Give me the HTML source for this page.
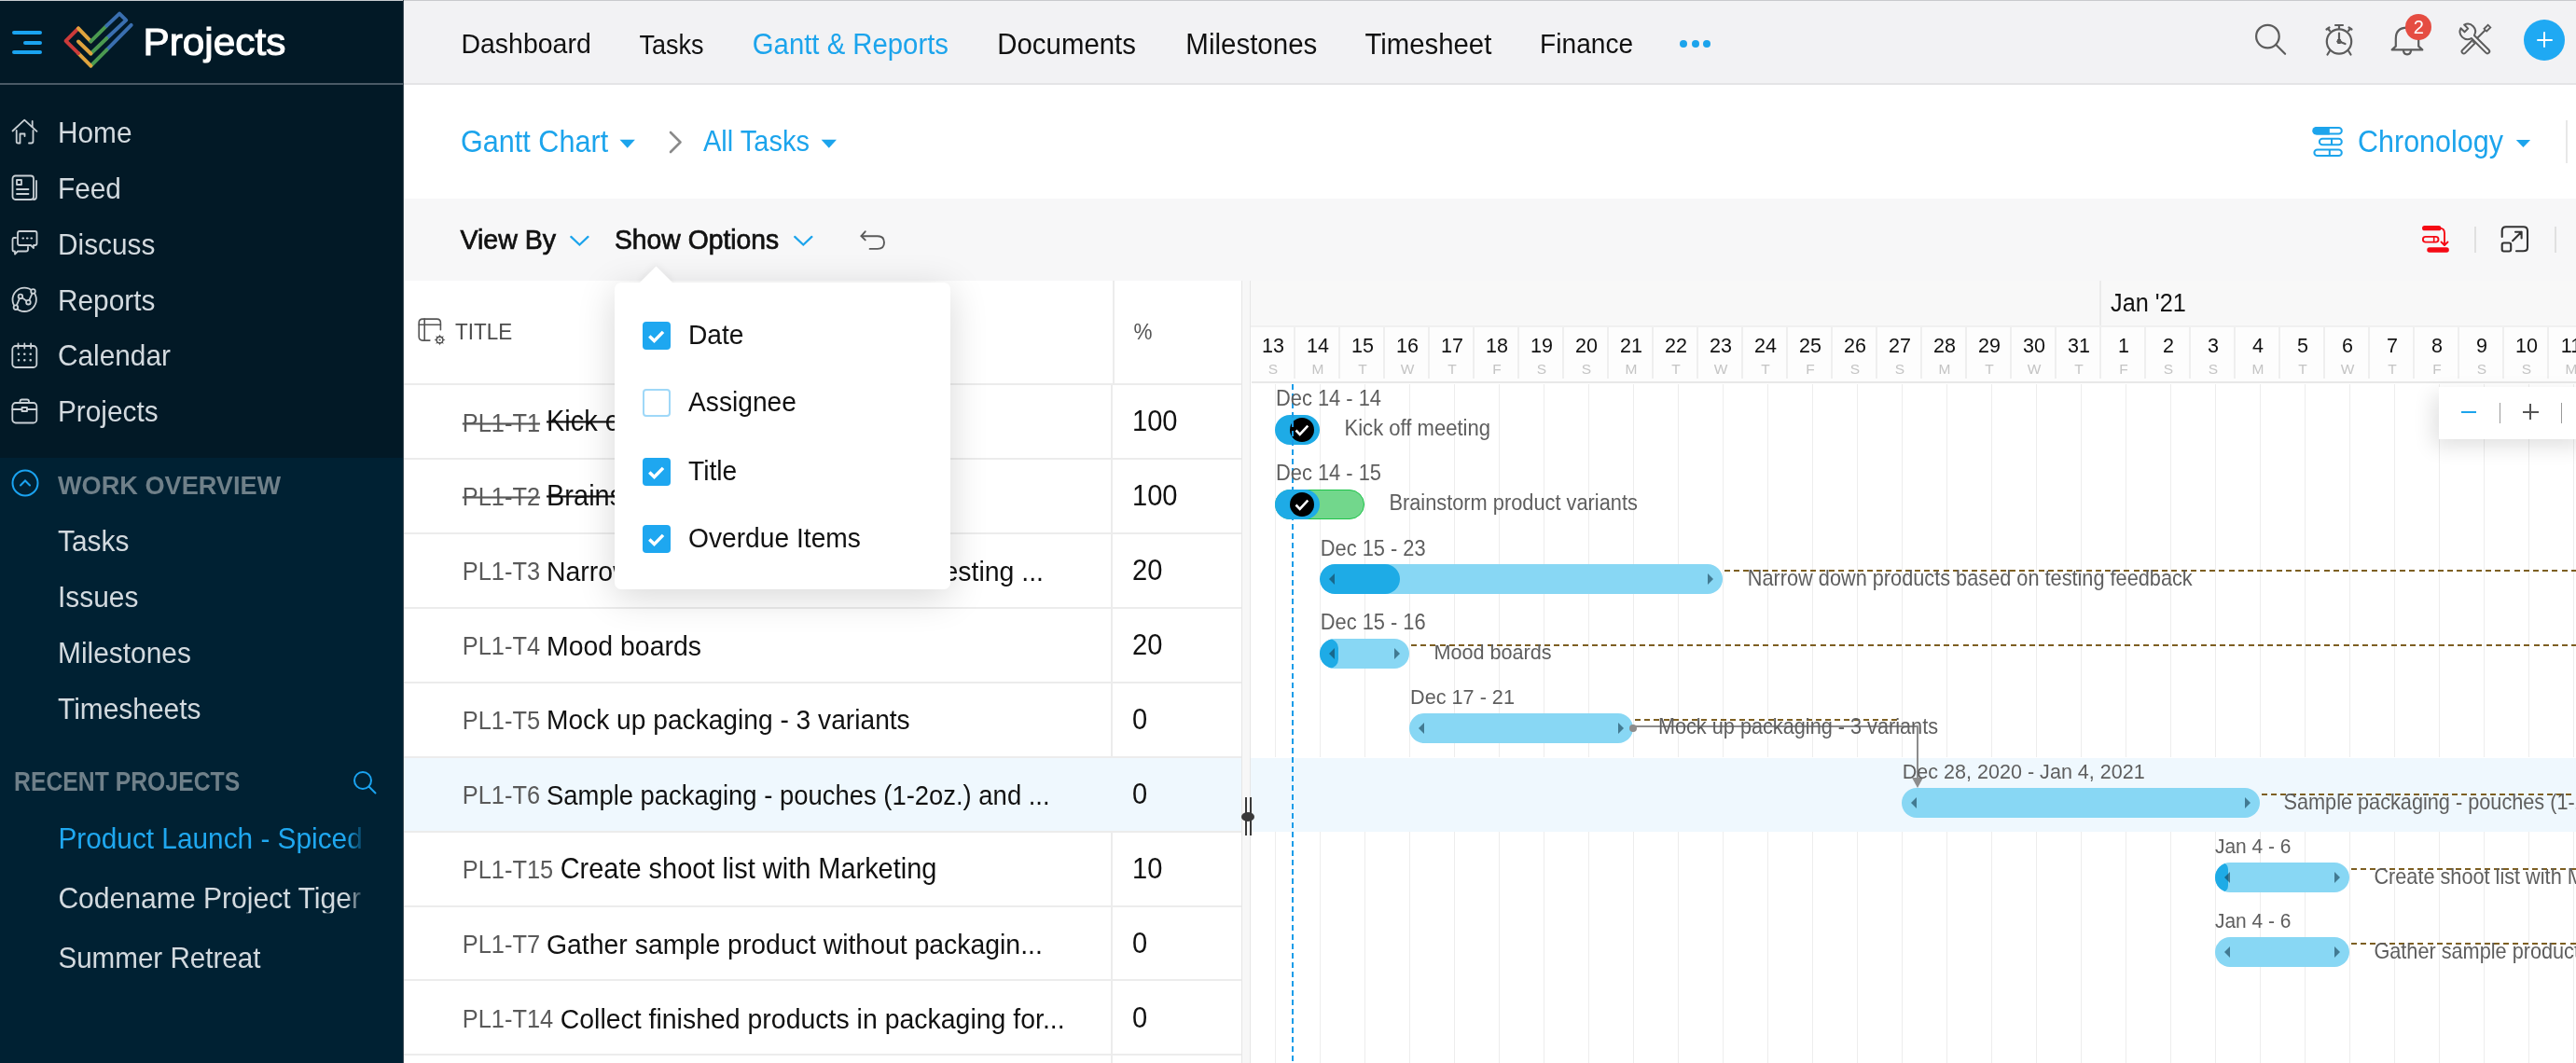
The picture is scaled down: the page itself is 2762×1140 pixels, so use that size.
<!DOCTYPE html>
<html><head><meta charset="utf-8"><style>
html,body{margin:0;padding:0;width:2762px;height:1140px;overflow:hidden;background:#fff}
body{position:relative;will-change:transform;font-family:"Liberation Sans",sans-serif}
.t{position:absolute;line-height:1;white-space:nowrap}
.r{position:absolute}
svg{position:absolute;overflow:visible}
</style></head><body>
<div class="r" style="left:0px;top:0px;width:433px;height:1140px;background:#002133"></div><div class="r" style="left:0px;top:0px;width:433px;height:491px;background:#021926"></div><div class="r" style="left:0px;top:0px;width:433px;height:1px;background:#c8ccd0"></div><div class="r" style="left:0px;top:89px;width:433px;height:2px;background:#4a5a66"></div><div class="r" style="left:432px;top:0px;width:1px;height:1140px;background:#3e4d57"></div><div class="r" style="left:13px;top:33px;width:32px;height:4px;background:#1aa3f0;border-radius:2px"></div><div class="r" style="left:25px;top:44px;width:20px;height:4px;background:#1aa3f0;border-radius:2px"></div><div class="r" style="left:13px;top:54px;width:32px;height:4px;background:#1aa3f0;border-radius:2px"></div><div class="t" style="left:153.5px;top:23.79px;font-size:42.3px;color:#fff;font-weight:400;transform:scale(1.0,0.98);transform-origin:0 35.81px;-webkit-text-stroke:1.1px #fff">Projects</div><div class="t" style="left:62px;top:127.77px;font-size:29.8px;color:#d3dadf;font-weight:400;transform:scale(1.0,1.06);transform-origin:0 25.23px;">Home</div><div class="t" style="left:62px;top:187.77px;font-size:29.8px;color:#d3dadf;font-weight:400;transform:scale(1.0,1.06);transform-origin:0 25.23px;">Feed</div><div class="t" style="left:62px;top:247.77px;font-size:29.8px;color:#d3dadf;font-weight:400;transform:scale(1.0,1.06);transform-origin:0 25.23px;">Discuss</div><div class="t" style="left:62px;top:307.77px;font-size:29.8px;color:#d3dadf;font-weight:400;transform:scale(1.0,1.06);transform-origin:0 25.23px;">Reports</div><div class="t" style="left:62px;top:366.77px;font-size:29.8px;color:#d3dadf;font-weight:400;transform:scale(1.0,1.06);transform-origin:0 25.23px;">Calendar</div><div class="t" style="left:62px;top:427.37px;font-size:29.8px;color:#d3dadf;font-weight:400;transform:scale(1.0,1.06);transform-origin:0 25.23px;">Projects</div><div class="t" style="left:61.7px;top:506.47px;font-size:28.5px;color:#6f8089;font-weight:700;transform:scale(0.952,1.0);transform-origin:0 24.13px;">WORK OVERVIEW</div><div class="t" style="left:62px;top:566.09px;font-size:29.9px;color:#d3dadf;font-weight:400;transform:scale(1.0,1.06);transform-origin:0 25.31px;">Tasks</div><div class="t" style="left:62px;top:625.69px;font-size:29.9px;color:#d3dadf;font-weight:400;transform:scale(1.0,1.06);transform-origin:0 25.31px;">Issues</div><div class="t" style="left:62px;top:685.69px;font-size:29.9px;color:#d3dadf;font-weight:400;transform:scale(1.0,1.06);transform-origin:0 25.31px;">Milestones</div><div class="t" style="left:62px;top:745.69px;font-size:29.9px;color:#d3dadf;font-weight:400;transform:scale(1.0,1.06);transform-origin:0 25.31px;">Timesheets</div><div class="t" style="left:14.7px;top:824.45px;font-size:29px;color:#6f8089;font-weight:700;transform:scale(0.854,1.0);transform-origin:0 24.55px;">RECENT PROJECTS</div><div class="t" style="left:62.4px;top:885.07px;font-size:29.8px;color:#1fa8f0;font-weight:400;transform:scale(1.0,1.06);transform-origin:0 25.23px;-webkit-mask-image:linear-gradient(to right,#000 310px,rgba(0,0,0,.25) 326px,transparent 330px)">Product Launch - Spiced</div><div class="t" style="left:62.4px;top:948.82px;font-size:30.1px;color:#d3dadf;font-weight:400;transform:scale(1.0,1.06);transform-origin:0 25.48px;-webkit-mask-image:linear-gradient(to right,#000 310px,rgba(0,0,0,.3) 324px,transparent 328px)">Codename Project Tiger</div><div class="t" style="left:62.4px;top:1013.14px;font-size:29.6px;color:#d3dadf;font-weight:400;transform:scale(1.0,1.06);transform-origin:0 25.06px;">Summer Retreat</div><div class="r" style="left:433px;top:0px;width:2329px;height:90px;background:#f2f2f4"></div><div class="r" style="left:433px;top:0px;width:2329px;height:1px;background:#c9cacd"></div><div class="r" style="left:433px;top:89px;width:2329px;height:2px;background:#e4e4e6"></div><div class="t" style="left:494.4px;top:33.37px;font-size:28.5px;color:#111;font-weight:400;transform:scale(1.0,1.06);transform-origin:0 24.13px;">Dashboard</div><div class="t" style="left:685.4px;top:34.59px;font-size:27.07px;color:#111;font-weight:400;transform:scale(1.0,1.06);transform-origin:0 22.91px;">Tasks</div><div class="t" style="left:1271.3px;top:32.51px;font-size:29.52px;color:#111;font-weight:400;transform:scale(1.0,1.06);transform-origin:0 24.99px;">Milestones</div><div class="t" style="left:1463.4px;top:32.66px;font-size:29.35px;color:#111;font-weight:400;transform:scale(1.0,1.06);transform-origin:0 24.84px;">Timesheet</div><div class="t" style="left:1651.1px;top:33.70px;font-size:28.11px;color:#111;font-weight:400;transform:scale(1.0,1.06);transform-origin:0 23.80px;">Finance</div><div class="t" style="left:1069.3px;top:32.61px;font-size:29.4px;color:#111;font-weight:400;transform:scale(1.0,1.06);transform-origin:0 24.89px;">Documents</div><div class="t" style="left:806.8px;top:32.68px;font-size:29.32px;color:#1ca4ec;font-weight:400;transform:scale(1.0,1.06);transform-origin:0 24.82px;">Gantt &amp; Reports</div><div class="r" style="left:433px;top:91px;width:2329px;height:122px;background:#fff"></div><div class="t" style="left:494px;top:137.10px;font-size:30.6px;color:#1ca4ec;font-weight:400;transform:scale(1.0,1.06);transform-origin:0 25.90px;">Gantt Chart</div><div class="t" style="left:754px;top:138.45px;font-size:29px;color:#1ca4ec;font-weight:400;transform:scale(1.0,1.06);transform-origin:0 24.55px;">All Tasks</div><div class="t" style="left:2528px;top:137.18px;font-size:30.5px;color:#1ca4ec;font-weight:400;transform:scale(1.0,1.06);transform-origin:0 25.82px;">Chronology</div><div class="r" style="left:433px;top:213px;width:2329px;height:88px;background:#f7f7f8"></div><div class="t" style="left:493.4px;top:242.99px;font-size:28.6px;color:#111;font-weight:400;transform:scale(1.0,1.06);transform-origin:0 24.21px;-webkit-text-stroke:0.7px #111">View By</div><div class="t" style="left:659px;top:243.24px;font-size:28.3px;color:#111;font-weight:400;transform:scale(1.0,1.06);transform-origin:0 23.96px;-webkit-text-stroke:0.7px #111">Show Options</div><div class="r" style="left:433px;top:301px;width:908px;height:839px;background:#fff"></div><div class="t" style="left:488.3px;top:344.21px;font-size:24.8px;color:#4a4a4a;font-weight:400;transform:scale(0.905,1.0);transform-origin:0 20.99px;">TITLE</div><div class="t" style="left:1215.6px;top:346.15px;font-size:22.5px;color:#555;font-weight:400;transform:scale(1.0,1.06);transform-origin:0 19.05px;">%</div><div class="r" style="left:1193px;top:301px;width:2px;height:110px;background:#ececec"></div><div class="r" style="left:1191px;top:411px;width:2px;height:729px;background:#ececec"></div><div class="r" style="left:1331px;top:301px;width:1px;height:839px;background:#e6e6e6"></div><div class="r" style="left:1332px;top:301px;width:8px;height:839px;background:#f7f7f7"></div><div class="r" style="left:1340px;top:301px;width:1px;height:839px;background:#e6e6e6"></div><div class="r" style="left:433px;top:813px;width:898px;height:79px;background:#eff8fe"></div><div class="r" style="left:1341px;top:813px;width:1421px;height:79px;background:#eff8fe"></div><div class="r" style="left:433px;top:411.0px;width:898px;height:2px;background:#ececec"></div><div class="r" style="left:433px;top:490.9px;width:898px;height:2px;background:#ececec"></div><div class="r" style="left:433px;top:570.9px;width:898px;height:2px;background:#ececec"></div><div class="r" style="left:433px;top:650.8px;width:898px;height:2px;background:#ececec"></div><div class="r" style="left:433px;top:730.7px;width:898px;height:2px;background:#ececec"></div><div class="r" style="left:433px;top:810.7px;width:898px;height:2px;background:#ececec"></div><div class="r" style="left:433px;top:890.6px;width:898px;height:2px;background:#ececec"></div><div class="r" style="left:433px;top:970.5px;width:898px;height:2px;background:#ececec"></div><div class="r" style="left:433px;top:1050.4px;width:898px;height:2px;background:#ececec"></div><div class="r" style="left:433px;top:1130.4px;width:898px;height:2px;background:#ececec"></div><div class="t" style="left:495.8px;top:441.50px;font-size:25.4px;color:#5a5a5a;font-weight:400;transform:scale(1.0,1.06);transform-origin:0 21.50px;text-decoration:line-through;">PL1-T1</div><div class="t" style="left:586px;top:438.45px;font-size:29px;color:#111;font-weight:400;transform:scale(1.0,1.06);transform-origin:0 24.55px;text-decoration:line-through;">Kick off meeting</div><div class="t" style="left:1214px;top:438.37px;font-size:29.1px;color:#111;font-weight:400;transform:scale(1.0,1.06);transform-origin:0 24.63px;">100</div><div class="t" style="left:495.8px;top:521.45px;font-size:25.4px;color:#5a5a5a;font-weight:400;transform:scale(1.0,1.06);transform-origin:0 21.50px;text-decoration:line-through;">PL1-T2</div><div class="t" style="left:586px;top:518.40px;font-size:29px;color:#111;font-weight:400;transform:scale(1.0,1.06);transform-origin:0 24.55px;text-decoration:line-through;">Brainstorm product variants</div><div class="t" style="left:1214px;top:518.32px;font-size:29.1px;color:#111;font-weight:400;transform:scale(1.0,1.06);transform-origin:0 24.63px;">100</div><div class="t" style="left:495.8px;top:601.40px;font-size:25.4px;color:#5a5a5a;font-weight:400;transform:scale(1.0,1.06);transform-origin:0 21.50px;">PL1-T3</div><div class="t" style="left:586px;top:598.81px;font-size:28.46px;color:#111;font-weight:400;transform:scale(1.0,1.06);transform-origin:0 24.09px;">Narrow down products based on testing ...</div><div class="t" style="left:1214px;top:598.27px;font-size:29.1px;color:#111;font-weight:400;transform:scale(1.0,1.06);transform-origin:0 24.63px;">20</div><div class="t" style="left:495.8px;top:681.35px;font-size:25.4px;color:#5a5a5a;font-weight:400;transform:scale(1.0,1.06);transform-origin:0 21.50px;">PL1-T4</div><div class="t" style="left:586px;top:678.78px;font-size:28.44px;color:#111;font-weight:400;transform:scale(1.0,1.06);transform-origin:0 24.07px;">Mood boards</div><div class="t" style="left:1214px;top:678.22px;font-size:29.1px;color:#111;font-weight:400;transform:scale(1.0,1.06);transform-origin:0 24.63px;">20</div><div class="t" style="left:495.8px;top:761.30px;font-size:25.4px;color:#5a5a5a;font-weight:400;transform:scale(1.0,1.06);transform-origin:0 21.50px;">PL1-T5</div><div class="t" style="left:586px;top:758.96px;font-size:28.16px;color:#111;font-weight:400;transform:scale(1.0,1.06);transform-origin:0 23.84px;">Mock up packaging - 3 variants</div><div class="t" style="left:1214px;top:758.17px;font-size:29.1px;color:#111;font-weight:400;transform:scale(1.0,1.06);transform-origin:0 24.63px;">0</div><div class="t" style="left:495.8px;top:841.25px;font-size:25.4px;color:#5a5a5a;font-weight:400;transform:scale(1.0,1.06);transform-origin:0 21.50px;">PL1-T6</div><div class="t" style="left:586px;top:839.53px;font-size:27.43px;color:#111;font-weight:400;transform:scale(1.0,1.06);transform-origin:0 23.22px;">Sample packaging - pouches (1-2oz.) and ...</div><div class="t" style="left:1214px;top:838.12px;font-size:29.1px;color:#111;font-weight:400;transform:scale(1.0,1.06);transform-origin:0 24.63px;">0</div><div class="t" style="left:495.8px;top:921.20px;font-size:25.4px;color:#5a5a5a;font-weight:400;transform:scale(1.0,1.06);transform-origin:0 21.50px;">PL1-T15</div><div class="t" style="left:600.7px;top:918.19px;font-size:28.95px;color:#111;font-weight:400;transform:scale(1.0,1.06);transform-origin:0 24.51px;">Create shoot list with Marketing</div><div class="t" style="left:1214px;top:918.07px;font-size:29.1px;color:#111;font-weight:400;transform:scale(1.0,1.06);transform-origin:0 24.63px;">10</div><div class="t" style="left:495.8px;top:1001.15px;font-size:25.4px;color:#5a5a5a;font-weight:400;transform:scale(1.0,1.06);transform-origin:0 21.50px;">PL1-T7</div><div class="t" style="left:586px;top:998.61px;font-size:28.4px;color:#111;font-weight:400;transform:scale(1.0,1.06);transform-origin:0 24.04px;">Gather sample product without packagin...</div><div class="t" style="left:1214px;top:998.02px;font-size:29.1px;color:#111;font-weight:400;transform:scale(1.0,1.06);transform-origin:0 24.63px;">0</div><div class="t" style="left:495.8px;top:1081.10px;font-size:25.4px;color:#5a5a5a;font-weight:400;transform:scale(1.0,1.06);transform-origin:0 21.50px;">PL1-T14</div><div class="t" style="left:600.7px;top:1078.51px;font-size:28.46px;color:#111;font-weight:400;transform:scale(1.0,1.06);transform-origin:0 24.09px;">Collect finished products in packaging for...</div><div class="t" style="left:1214px;top:1077.97px;font-size:29.1px;color:#111;font-weight:400;transform:scale(1.0,1.06);transform-origin:0 24.63px;">0</div><div class="r" style="left:1341px;top:301px;width:1421px;height:109px;background:#fdfdfd"></div><div class="r" style="left:1341px;top:301px;width:1421px;height:48px;background:#f8f8f8"></div><div class="r" style="left:1341px;top:349px;width:1421px;height:2px;background:#f0f0f0"></div><div class="r" style="left:1342px;top:409px;width:1420px;height:2px;background:#e8e8e8"></div><div class="r" style="left:2251px;top:301px;width:2px;height:48px;background:#ebebeb"></div><div class="t" style="left:2263px;top:313.18px;font-size:25.3px;color:#111;font-weight:400;transform:scale(1.0,1.06);transform-origin:0 21.42px;">Jan '21</div><div class="r" style="left:1387px;top:351px;width:2px;height:55px;background:#efefef"></div><div class="t" style="left:1335px;width:60px;text-align:center;top:360.70px;font-size:21.5px;color:#111">13</div><div class="t" style="left:1335px;width:60px;text-align:center;top:388.38px;font-size:15.5px;color:#c4c4c4">S</div><div class="r" style="left:1435px;top:351px;width:2px;height:55px;background:#efefef"></div><div class="t" style="left:1383px;width:60px;text-align:center;top:360.70px;font-size:21.5px;color:#111">14</div><div class="t" style="left:1383px;width:60px;text-align:center;top:388.38px;font-size:15.5px;color:#c4c4c4">M</div><div class="r" style="left:1483px;top:351px;width:2px;height:55px;background:#efefef"></div><div class="t" style="left:1431px;width:60px;text-align:center;top:360.70px;font-size:21.5px;color:#111">15</div><div class="t" style="left:1431px;width:60px;text-align:center;top:388.38px;font-size:15.5px;color:#c4c4c4">T</div><div class="r" style="left:1531px;top:351px;width:2px;height:55px;background:#efefef"></div><div class="t" style="left:1479px;width:60px;text-align:center;top:360.70px;font-size:21.5px;color:#111">16</div><div class="t" style="left:1479px;width:60px;text-align:center;top:388.38px;font-size:15.5px;color:#c4c4c4">W</div><div class="r" style="left:1579px;top:351px;width:2px;height:55px;background:#efefef"></div><div class="t" style="left:1527px;width:60px;text-align:center;top:360.70px;font-size:21.5px;color:#111">17</div><div class="t" style="left:1527px;width:60px;text-align:center;top:388.38px;font-size:15.5px;color:#c4c4c4">T</div><div class="r" style="left:1627px;top:351px;width:2px;height:55px;background:#efefef"></div><div class="t" style="left:1575px;width:60px;text-align:center;top:360.70px;font-size:21.5px;color:#111">18</div><div class="t" style="left:1575px;width:60px;text-align:center;top:388.38px;font-size:15.5px;color:#c4c4c4">F</div><div class="r" style="left:1675px;top:351px;width:2px;height:55px;background:#efefef"></div><div class="t" style="left:1623px;width:60px;text-align:center;top:360.70px;font-size:21.5px;color:#111">19</div><div class="t" style="left:1623px;width:60px;text-align:center;top:388.38px;font-size:15.5px;color:#c4c4c4">S</div><div class="r" style="left:1723px;top:351px;width:2px;height:55px;background:#efefef"></div><div class="t" style="left:1671px;width:60px;text-align:center;top:360.70px;font-size:21.5px;color:#111">20</div><div class="t" style="left:1671px;width:60px;text-align:center;top:388.38px;font-size:15.5px;color:#c4c4c4">S</div><div class="r" style="left:1771px;top:351px;width:2px;height:55px;background:#efefef"></div><div class="t" style="left:1719px;width:60px;text-align:center;top:360.70px;font-size:21.5px;color:#111">21</div><div class="t" style="left:1719px;width:60px;text-align:center;top:388.38px;font-size:15.5px;color:#c4c4c4">M</div><div class="r" style="left:1819px;top:351px;width:2px;height:55px;background:#efefef"></div><div class="t" style="left:1767px;width:60px;text-align:center;top:360.70px;font-size:21.5px;color:#111">22</div><div class="t" style="left:1767px;width:60px;text-align:center;top:388.38px;font-size:15.5px;color:#c4c4c4">T</div><div class="r" style="left:1867px;top:351px;width:2px;height:55px;background:#efefef"></div><div class="t" style="left:1815px;width:60px;text-align:center;top:360.70px;font-size:21.5px;color:#111">23</div><div class="t" style="left:1815px;width:60px;text-align:center;top:388.38px;font-size:15.5px;color:#c4c4c4">W</div><div class="r" style="left:1915px;top:351px;width:2px;height:55px;background:#efefef"></div><div class="t" style="left:1863px;width:60px;text-align:center;top:360.70px;font-size:21.5px;color:#111">24</div><div class="t" style="left:1863px;width:60px;text-align:center;top:388.38px;font-size:15.5px;color:#c4c4c4">T</div><div class="r" style="left:1963px;top:351px;width:2px;height:55px;background:#efefef"></div><div class="t" style="left:1911px;width:60px;text-align:center;top:360.70px;font-size:21.5px;color:#111">25</div><div class="t" style="left:1911px;width:60px;text-align:center;top:388.38px;font-size:15.5px;color:#c4c4c4">F</div><div class="r" style="left:2011px;top:351px;width:2px;height:55px;background:#efefef"></div><div class="t" style="left:1959px;width:60px;text-align:center;top:360.70px;font-size:21.5px;color:#111">26</div><div class="t" style="left:1959px;width:60px;text-align:center;top:388.38px;font-size:15.5px;color:#c4c4c4">S</div><div class="r" style="left:2059px;top:351px;width:2px;height:55px;background:#efefef"></div><div class="t" style="left:2007px;width:60px;text-align:center;top:360.70px;font-size:21.5px;color:#111">27</div><div class="t" style="left:2007px;width:60px;text-align:center;top:388.38px;font-size:15.5px;color:#c4c4c4">S</div><div class="r" style="left:2107px;top:351px;width:2px;height:55px;background:#efefef"></div><div class="t" style="left:2055px;width:60px;text-align:center;top:360.70px;font-size:21.5px;color:#111">28</div><div class="t" style="left:2055px;width:60px;text-align:center;top:388.38px;font-size:15.5px;color:#c4c4c4">M</div><div class="r" style="left:2155px;top:351px;width:2px;height:55px;background:#efefef"></div><div class="t" style="left:2103px;width:60px;text-align:center;top:360.70px;font-size:21.5px;color:#111">29</div><div class="t" style="left:2103px;width:60px;text-align:center;top:388.38px;font-size:15.5px;color:#c4c4c4">T</div><div class="r" style="left:2203px;top:351px;width:2px;height:55px;background:#efefef"></div><div class="t" style="left:2151px;width:60px;text-align:center;top:360.70px;font-size:21.5px;color:#111">30</div><div class="t" style="left:2151px;width:60px;text-align:center;top:388.38px;font-size:15.5px;color:#c4c4c4">W</div><div class="r" style="left:2251px;top:351px;width:2px;height:55px;background:#efefef"></div><div class="t" style="left:2199px;width:60px;text-align:center;top:360.70px;font-size:21.5px;color:#111">31</div><div class="t" style="left:2199px;width:60px;text-align:center;top:388.38px;font-size:15.5px;color:#c4c4c4">T</div><div class="r" style="left:2299px;top:351px;width:2px;height:55px;background:#efefef"></div><div class="t" style="left:2247px;width:60px;text-align:center;top:360.70px;font-size:21.5px;color:#111">1</div><div class="t" style="left:2247px;width:60px;text-align:center;top:388.38px;font-size:15.5px;color:#c4c4c4">F</div><div class="r" style="left:2347px;top:351px;width:2px;height:55px;background:#efefef"></div><div class="t" style="left:2295px;width:60px;text-align:center;top:360.70px;font-size:21.5px;color:#111">2</div><div class="t" style="left:2295px;width:60px;text-align:center;top:388.38px;font-size:15.5px;color:#c4c4c4">S</div><div class="r" style="left:2395px;top:351px;width:2px;height:55px;background:#efefef"></div><div class="t" style="left:2343px;width:60px;text-align:center;top:360.70px;font-size:21.5px;color:#111">3</div><div class="t" style="left:2343px;width:60px;text-align:center;top:388.38px;font-size:15.5px;color:#c4c4c4">S</div><div class="r" style="left:2443px;top:351px;width:2px;height:55px;background:#efefef"></div><div class="t" style="left:2391px;width:60px;text-align:center;top:360.70px;font-size:21.5px;color:#111">4</div><div class="t" style="left:2391px;width:60px;text-align:center;top:388.38px;font-size:15.5px;color:#c4c4c4">M</div><div class="r" style="left:2491px;top:351px;width:2px;height:55px;background:#efefef"></div><div class="t" style="left:2439px;width:60px;text-align:center;top:360.70px;font-size:21.5px;color:#111">5</div><div class="t" style="left:2439px;width:60px;text-align:center;top:388.38px;font-size:15.5px;color:#c4c4c4">T</div><div class="r" style="left:2539px;top:351px;width:2px;height:55px;background:#efefef"></div><div class="t" style="left:2487px;width:60px;text-align:center;top:360.70px;font-size:21.5px;color:#111">6</div><div class="t" style="left:2487px;width:60px;text-align:center;top:388.38px;font-size:15.5px;color:#c4c4c4">W</div><div class="r" style="left:2587px;top:351px;width:2px;height:55px;background:#efefef"></div><div class="t" style="left:2535px;width:60px;text-align:center;top:360.70px;font-size:21.5px;color:#111">7</div><div class="t" style="left:2535px;width:60px;text-align:center;top:388.38px;font-size:15.5px;color:#c4c4c4">T</div><div class="r" style="left:2635px;top:351px;width:2px;height:55px;background:#efefef"></div><div class="t" style="left:2583px;width:60px;text-align:center;top:360.70px;font-size:21.5px;color:#111">8</div><div class="t" style="left:2583px;width:60px;text-align:center;top:388.38px;font-size:15.5px;color:#c4c4c4">F</div><div class="r" style="left:2683px;top:351px;width:2px;height:55px;background:#efefef"></div><div class="t" style="left:2631px;width:60px;text-align:center;top:360.70px;font-size:21.5px;color:#111">9</div><div class="t" style="left:2631px;width:60px;text-align:center;top:388.38px;font-size:15.5px;color:#c4c4c4">S</div><div class="r" style="left:2731px;top:351px;width:2px;height:55px;background:#efefef"></div><div class="t" style="left:2679px;width:60px;text-align:center;top:360.70px;font-size:21.5px;color:#111">10</div><div class="t" style="left:2679px;width:60px;text-align:center;top:388.38px;font-size:15.5px;color:#c4c4c4">S</div><div class="r" style="left:2779px;top:351px;width:2px;height:55px;background:#efefef"></div><div class="t" style="left:2727px;width:60px;text-align:center;top:360.70px;font-size:21.5px;color:#111">11</div><div class="t" style="left:2727px;width:60px;text-align:center;top:388.38px;font-size:15.5px;color:#c4c4c4">M</div><div class="r" style="left:1367px;top:412px;width:1px;height:400px;background:#ededed"></div><div class="r" style="left:1367px;top:892px;width:1px;height:248px;background:#ededed"></div><div class="r" style="left:1415px;top:412px;width:1px;height:400px;background:#ededed"></div><div class="r" style="left:1415px;top:892px;width:1px;height:248px;background:#ededed"></div><div class="r" style="left:1463px;top:412px;width:1px;height:400px;background:#ededed"></div><div class="r" style="left:1463px;top:892px;width:1px;height:248px;background:#ededed"></div><div class="r" style="left:1511px;top:412px;width:1px;height:400px;background:#ededed"></div><div class="r" style="left:1511px;top:892px;width:1px;height:248px;background:#ededed"></div><div class="r" style="left:1559px;top:412px;width:1px;height:400px;background:#ededed"></div><div class="r" style="left:1559px;top:892px;width:1px;height:248px;background:#ededed"></div><div class="r" style="left:1607px;top:412px;width:1px;height:400px;background:#ededed"></div><div class="r" style="left:1607px;top:892px;width:1px;height:248px;background:#ededed"></div><div class="r" style="left:1655px;top:412px;width:1px;height:400px;background:#ededed"></div><div class="r" style="left:1655px;top:892px;width:1px;height:248px;background:#ededed"></div><div class="r" style="left:1703px;top:412px;width:1px;height:400px;background:#ededed"></div><div class="r" style="left:1703px;top:892px;width:1px;height:248px;background:#ededed"></div><div class="r" style="left:1751px;top:412px;width:1px;height:400px;background:#ededed"></div><div class="r" style="left:1751px;top:892px;width:1px;height:248px;background:#ededed"></div><div class="r" style="left:1799px;top:412px;width:1px;height:400px;background:#ededed"></div><div class="r" style="left:1799px;top:892px;width:1px;height:248px;background:#ededed"></div><div class="r" style="left:1847px;top:412px;width:1px;height:400px;background:#ededed"></div><div class="r" style="left:1847px;top:892px;width:1px;height:248px;background:#ededed"></div><div class="r" style="left:1895px;top:412px;width:1px;height:400px;background:#ededed"></div><div class="r" style="left:1895px;top:892px;width:1px;height:248px;background:#ededed"></div><div class="r" style="left:1943px;top:412px;width:1px;height:400px;background:#ededed"></div><div class="r" style="left:1943px;top:892px;width:1px;height:248px;background:#ededed"></div><div class="r" style="left:1991px;top:412px;width:1px;height:400px;background:#ededed"></div><div class="r" style="left:1991px;top:892px;width:1px;height:248px;background:#ededed"></div><div class="r" style="left:2039px;top:412px;width:1px;height:400px;background:#ededed"></div><div class="r" style="left:2039px;top:892px;width:1px;height:248px;background:#ededed"></div><div class="r" style="left:2087px;top:412px;width:1px;height:400px;background:#ededed"></div><div class="r" style="left:2087px;top:892px;width:1px;height:248px;background:#ededed"></div><div class="r" style="left:2135px;top:412px;width:1px;height:400px;background:#ededed"></div><div class="r" style="left:2135px;top:892px;width:1px;height:248px;background:#ededed"></div><div class="r" style="left:2183px;top:412px;width:1px;height:400px;background:#ededed"></div><div class="r" style="left:2183px;top:892px;width:1px;height:248px;background:#ededed"></div><div class="r" style="left:2231px;top:412px;width:1px;height:400px;background:#ededed"></div><div class="r" style="left:2231px;top:892px;width:1px;height:248px;background:#ededed"></div><div class="r" style="left:2279px;top:412px;width:1px;height:400px;background:#ededed"></div><div class="r" style="left:2279px;top:892px;width:1px;height:248px;background:#ededed"></div><div class="r" style="left:2327px;top:412px;width:1px;height:400px;background:#ededed"></div><div class="r" style="left:2327px;top:892px;width:1px;height:248px;background:#ededed"></div><div class="r" style="left:2375px;top:412px;width:1px;height:400px;background:#ededed"></div><div class="r" style="left:2375px;top:892px;width:1px;height:248px;background:#ededed"></div><div class="r" style="left:2423px;top:412px;width:1px;height:400px;background:#ededed"></div><div class="r" style="left:2423px;top:892px;width:1px;height:248px;background:#ededed"></div><div class="r" style="left:2471px;top:412px;width:1px;height:400px;background:#ededed"></div><div class="r" style="left:2471px;top:892px;width:1px;height:248px;background:#ededed"></div><div class="r" style="left:2519px;top:412px;width:1px;height:400px;background:#ededed"></div><div class="r" style="left:2519px;top:892px;width:1px;height:248px;background:#ededed"></div><div class="r" style="left:2567px;top:412px;width:1px;height:400px;background:#ededed"></div><div class="r" style="left:2567px;top:892px;width:1px;height:248px;background:#ededed"></div><div class="r" style="left:2615px;top:412px;width:1px;height:400px;background:#ededed"></div><div class="r" style="left:2615px;top:892px;width:1px;height:248px;background:#ededed"></div><div class="r" style="left:2663px;top:412px;width:1px;height:400px;background:#ededed"></div><div class="r" style="left:2663px;top:892px;width:1px;height:248px;background:#ededed"></div><div class="r" style="left:2711px;top:412px;width:1px;height:400px;background:#ededed"></div><div class="r" style="left:2711px;top:892px;width:1px;height:248px;background:#ededed"></div><div class="r" style="left:2759px;top:412px;width:1px;height:400px;background:#ededed"></div><div class="r" style="left:2759px;top:892px;width:1px;height:248px;background:#ededed"></div><div class="r" style="left:1849px;top:611px;width:913px;height:2px;background:repeating-linear-gradient(to right,#7d5f22 0 6px,transparent 6px 10.2px)"></div><div class="r" style="left:1513px;top:691px;width:1249px;height:2px;background:repeating-linear-gradient(to right,#7d5f22 0 6px,transparent 6px 10.2px)"></div><div class="r" style="left:1753px;top:771px;width:284px;height:2px;background:repeating-linear-gradient(to right,#7d5f22 0 6px,transparent 6px 10.2px)"></div><div class="r" style="left:2425px;top:851px;width:337px;height:2px;background:repeating-linear-gradient(to right,#7d5f22 0 6px,transparent 6px 10.2px)"></div><div class="r" style="left:2521px;top:931px;width:241px;height:2px;background:repeating-linear-gradient(to right,#7d5f22 0 6px,transparent 6px 10.2px)"></div><div class="r" style="left:2521px;top:1011px;width:241px;height:2px;background:repeating-linear-gradient(to right,#7d5f22 0 6px,transparent 6px 10.2px)"></div><div class="r" style="left:1367px;top:445px;width:48px;height:32px;background:#1eabe6;border-radius:16px"></div><svg style="left:1383px;top:448.2px" width="26" height="26" viewBox="0 0 26 26"><circle cx="13" cy="13" r="13" fill="#000"/><path d="M6.5 13.5 L10.7 17.8 L19.3 8.7" stroke="#fff" stroke-width="2.6" fill="none"/></svg><div class="r" style="left:1385px;top:412px;width:2px;height:728px;background:repeating-linear-gradient(to bottom,#1a9ce8 0 6px,transparent 6px 10px)"></div><div class="r" style="left:1367px;top:525px;width:96px;height:32px;background:#72d78c;border:1.5px solid #1ec44a;border-radius:16px;box-sizing:border-box"></div><div class="r" style="left:1367px;top:525px;width:48px;height:32px;background:#1eabe6;border-radius:16px"></div><svg style="left:1383px;top:528.4px" width="26" height="26" viewBox="0 0 26 26"><circle cx="13" cy="13" r="13" fill="#000"/><path d="M6.5 13.5 L10.7 17.8 L19.3 8.7" stroke="#fff" stroke-width="2.6" fill="none"/></svg><div class="r" style="left:1415px;top:605px;width:432px;height:32px;background:#88d7f4;border-radius:16px;overflow:hidden"><div style="position:absolute;left:0;top:0;width:86px;height:32px;background:#1eabe6;border-radius:16px"></div></div><div class="r" style="left:1425px;top:615px;width:0;height:0;border-top:6px solid transparent;border-bottom:6px solid transparent;border-right:6px solid rgba(20,60,80,.6)"></div><div class="r" style="left:1831px;top:615px;width:0;height:0;border-top:6px solid transparent;border-bottom:6px solid transparent;border-left:6px solid rgba(20,60,80,.6)"></div><div class="r" style="left:1415px;top:685px;width:96px;height:32px;background:#88d7f4;border-radius:16px;overflow:hidden"><div style="position:absolute;left:0;top:0;width:20px;height:32px;background:#1eabe6;border-radius:16px"></div></div><div class="r" style="left:1425px;top:695px;width:0;height:0;border-top:6px solid transparent;border-bottom:6px solid transparent;border-right:6px solid rgba(20,60,80,.6)"></div><div class="r" style="left:1495px;top:695px;width:0;height:0;border-top:6px solid transparent;border-bottom:6px solid transparent;border-left:6px solid rgba(20,60,80,.6)"></div><div class="r" style="left:1511px;top:765px;width:240px;height:32px;background:#88d7f4;border-radius:16px;overflow:hidden"></div><div class="r" style="left:1521px;top:775px;width:0;height:0;border-top:6px solid transparent;border-bottom:6px solid transparent;border-right:6px solid rgba(20,60,80,.6)"></div><div class="r" style="left:1735px;top:775px;width:0;height:0;border-top:6px solid transparent;border-bottom:6px solid transparent;border-left:6px solid rgba(20,60,80,.6)"></div><div class="r" style="left:2039px;top:845px;width:384px;height:32px;background:#88d7f4;border-radius:16px;overflow:hidden"></div><div class="r" style="left:2049px;top:855px;width:0;height:0;border-top:6px solid transparent;border-bottom:6px solid transparent;border-right:6px solid rgba(20,60,80,.6)"></div><div class="r" style="left:2407px;top:855px;width:0;height:0;border-top:6px solid transparent;border-bottom:6px solid transparent;border-left:6px solid rgba(20,60,80,.6)"></div><div class="r" style="left:2375px;top:925px;width:144px;height:32px;background:#88d7f4;border-radius:16px;overflow:hidden"><div style="position:absolute;left:0;top:0;width:14px;height:32px;background:#1eabe6;border-radius:16px"></div></div><div class="r" style="left:2385px;top:935px;width:0;height:0;border-top:6px solid transparent;border-bottom:6px solid transparent;border-right:6px solid rgba(20,60,80,.6)"></div><div class="r" style="left:2503px;top:935px;width:0;height:0;border-top:6px solid transparent;border-bottom:6px solid transparent;border-left:6px solid rgba(20,60,80,.6)"></div><div class="r" style="left:2375px;top:1005px;width:144px;height:32px;background:#88d7f4;border-radius:16px;overflow:hidden"></div><div class="r" style="left:2385px;top:1015px;width:0;height:0;border-top:6px solid transparent;border-bottom:6px solid transparent;border-right:6px solid rgba(20,60,80,.6)"></div><div class="r" style="left:2503px;top:1015px;width:0;height:0;border-top:6px solid transparent;border-bottom:6px solid transparent;border-left:6px solid rgba(20,60,80,.6)"></div><div class="r" style="left:1751px;top:777.7px;width:305px;height:2px;background:#8c8c8c"></div><div class="r" style="left:2054.7px;top:777.7px;width:2px;height:60px;background:#8c8c8c"></div><div class="r" style="left:2049.7px;top:833.5px;width:0;height:0;border-left:6px solid transparent;border-right:6px solid transparent;border-top:11px solid #8c8c8c"></div><div class="r" style="left:1747px;top:777px;width:8px;height:8px;border-radius:50%;background:#8c8c8c"></div><div class="t" style="left:1368px;top:416.80px;font-size:21.86px;color:#5e5e5e;font-weight:400;transform:scale(1.0,1.06);transform-origin:0 18.50px;">Dec 14 - 14</div><div class="t" style="left:1441.5px;top:448.53px;font-size:22.06px;color:#5e5e5e;font-weight:400;transform:scale(1.0,1.06);transform-origin:0 18.67px;">Kick off meeting</div><div class="t" style="left:1368px;top:496.80px;font-size:21.86px;color:#5e5e5e;font-weight:400;transform:scale(1.0,1.06);transform-origin:0 18.50px;">Dec 14 - 15</div><div class="t" style="left:1489.4px;top:528.84px;font-size:21.81px;color:#5e5e5e;font-weight:400;transform:scale(1.0,1.06);transform-origin:0 18.46px;">Brainstorm product variants</div><div class="t" style="left:1415.8px;top:577.81px;font-size:21.84px;color:#5e5e5e;font-weight:400;transform:scale(1.0,1.06);transform-origin:0 18.49px;">Dec 15 - 23</div><div class="t" style="left:1873.8px;top:609.81px;font-size:21.73px;color:#5e5e5e;font-weight:400;transform:scale(1.0,1.06);transform-origin:0 18.39px;">Narrow down products based on testing feedback</div><div class="t" style="left:1415.8px;top:656.81px;font-size:21.84px;color:#5e5e5e;font-weight:400;transform:scale(1.0,1.06);transform-origin:0 18.49px;">Dec 15 - 16</div><div class="t" style="left:1537.4px;top:689.40px;font-size:21.62px;color:#5e5e5e;font-weight:400;transform:scale(1.0,1.06);transform-origin:0 18.30px;">Mood boards</div><div class="t" style="left:1512px;top:737.36px;font-size:21.67px;color:#5e5e5e;font-weight:400;transform:scale(1.0,1.06);transform-origin:0 18.34px;">Dec 17 - 21</div><div class="t" style="left:1777.9px;top:768.93px;font-size:21.7px;color:#5e5e5e;font-weight:400;transform:scale(1.0,1.06);transform-origin:0 18.37px;">Mock up packaging - 3 variants</div><div class="t" style="left:2039.8px;top:817.26px;font-size:21.55px;color:#5e5e5e;font-weight:400;transform:scale(1.0,1.06);transform-origin:0 18.24px;">Dec 28, 2020 - Jan 4, 2021</div><div class="t" style="left:2448.5px;top:849.83px;font-size:21.7px;color:#5e5e5e;font-weight:400;transform:scale(1.0,1.06);transform-origin:0 18.37px;">Sample packaging - pouches (1-2oz.) and sachets</div><div class="t" style="left:2375px;top:897.77px;font-size:20.95px;color:#5e5e5e;font-weight:400;transform:scale(1.0,1.06);transform-origin:0 17.73px;">Jan 4 - 6</div><div class="t" style="left:2545.4px;top:929.63px;font-size:21.7px;color:#5e5e5e;font-weight:400;transform:scale(1.0,1.06);transform-origin:0 18.37px;">Create shoot list with Marketing</div><div class="t" style="left:2375px;top:977.67px;font-size:20.95px;color:#5e5e5e;font-weight:400;transform:scale(1.0,1.06);transform-origin:0 17.73px;">Jan 4 - 6</div><div class="t" style="left:2545.4px;top:1009.63px;font-size:21.7px;color:#5e5e5e;font-weight:400;transform:scale(1.0,1.06);transform-origin:0 18.37px;">Gather sample product without packaging</div><svg style="left:60px;top:5px" width="90" height="75" viewBox="0 0 90 75"><g fill="none" stroke-width="4" stroke-linecap="round" stroke-linejoin="round"><path d="M80.7 21.9 L54.3 48.7" stroke="#3a6fb0"/><path d="M54.3 48.7 L37.4 65.6" stroke="#4b9a50"/><path d="M37.4 65.6 L24 52.2" stroke="#e0a43e"/><path d="M24 52.2 L10.6 38.8 L24 25.4" stroke="#cc3b3a"/><path d="M24 25.4 L37.4 39.3" stroke="#e0a43e"/><path d="M37.4 39.3 L54.3 22.6" stroke="#4b9a50"/><path d="M54.3 22.6 L68.1 9.6 L75.2 16.6 L54.3 36.2" stroke="#3a6fb0"/><path d="M54.3 36.2 L37.4 52.5" stroke="#4b9a50"/><path d="M37.4 52.5 L24 39.5" stroke="#e0a43e"/></g></svg><svg style="left:12px;top:126px" width="30" height="30" viewBox="0 0 30 30"><g fill="none" stroke="#c9d0d5" stroke-width="1.8" stroke-linecap="round" stroke-linejoin="round"><path d="M1.5 14.5 L14.2 2.6 L27.5 14.8"/><path d="M22.7 4 V10"/><path d="M5.7 14 V26 Q5.7 27.5 7.5 27.5 H9.5 V17.5 H14.5 V20"/><path d="M23.5 14 V25.5 Q23.5 27.5 21.5 27.5 H19"/></g></svg><svg style="left:12px;top:187px" width="30" height="30" viewBox="0 0 30 30"><g fill="none" stroke="#c9d0d5" stroke-width="1.8" stroke-linecap="round" stroke-linejoin="round"><rect x="1.5" y="1.5" width="22.5" height="25.5" rx="3"/><path d="M27 7 V24 Q27 27 24 27"/><rect x="6" y="6" width="5" height="5"/><path d="M6 16 H18.5 M6 21 H18.5"/></g></svg><svg style="left:12px;top:246px" width="30" height="30" viewBox="0 0 30 30"><g fill="none" stroke="#c9d0d5" stroke-width="1.8" stroke-linecap="round" stroke-linejoin="round"><path d="M9 2 H25.5 Q27.5 2 27.5 4 V15 Q27.5 17 25.5 17 H24 V20 L21 17 H9 Q7 17 7 15 V4 Q7 2 9 2 Z"/><path d="M5 9 H3 Q1.5 9 1.5 11 V21.5 Q1.5 23.5 3 23.5 H4 V26.5 L7 23.5 H16 Q18 23.5 18 21.5 V19"/><path d="M12.5 9.5 H13 M17 9.5 H17.5 M21.5 9.5 H22" stroke-width="2.2"/></g></svg><svg style="left:12px;top:307px" width="30" height="30" viewBox="0 0 30 30"><g fill="none" stroke="#c9d0d5" stroke-width="1.8" stroke-linecap="round" stroke-linejoin="round"><circle cx="14.2" cy="14.3" r="12.7"/><path d="M4.9 22.7 L9.9 10.9 L18.4 17.2 L23.5 5.5"/><circle cx="4.9" cy="22.7" r="2.3" fill="#021926"/><circle cx="9.9" cy="10.9" r="2.3" fill="#021926"/><circle cx="18.4" cy="17.2" r="2.3" fill="#021926"/><circle cx="23.5" cy="5.5" r="2.3" fill="#021926"/></g></svg><svg style="left:12px;top:367px" width="30" height="30" viewBox="0 0 30 30"><g fill="none" stroke="#c9d0d5" stroke-width="1.8" stroke-linecap="round" stroke-linejoin="round"><rect x="1.3" y="4" width="26" height="23" rx="3.5"/><path d="M7.5 1.5 V6.5 M14.3 1.5 V6.5 M21.1 1.5 V6.5"/><path d="M7.9 12.7 h.2 M14.2 12.7 h.2 M20.6 12.7 h.2 M7.9 19.2 h.2 M14.2 19.2 h.2 M20.6 19.2 h.2" stroke-width="2.4"/></g></svg><svg style="left:12px;top:426px" width="30" height="30" viewBox="0 0 30 30"><g fill="none" stroke="#c9d0d5" stroke-width="1.8" stroke-linecap="round" stroke-linejoin="round"><rect x="1.3" y="6" width="26" height="21.5" rx="3.5"/><path d="M9.5 6 V4.5 Q9.5 2.5 11.5 2.5 H17 Q19 2.5 19 4.5 V6"/><path d="M1.3 13 H11.5 M17 13 H27.3"/><rect x="11.5" y="11" width="5.5" height="4"/></g></svg><svg style="left:12px;top:503px" width="30" height="30" viewBox="0 0 30 30"><g fill="none" stroke="#1aa3f0" stroke-width="2"><circle cx="15" cy="15" r="13.5"/><path d="M10 17.5 L15 12.5 L20 17.5" stroke-linecap="round"/></g></svg><svg style="left:378px;top:826px" width="28" height="28" viewBox="0 0 28 28"><g fill="none" stroke="#1aa3f0" stroke-width="2" stroke-linecap="round"><circle cx="11" cy="11" r="9"/><path d="M17.5 17.5 L24.5 24.5"/></g></svg><div class="r" style="left:1801px;top:43px;width:8px;height:8px;background:#1ca4ec;border-radius:50%"></div><div class="r" style="left:1813.5px;top:43px;width:8px;height:8px;background:#1ca4ec;border-radius:50%"></div><div class="r" style="left:1826px;top:43px;width:8px;height:8px;background:#1ca4ec;border-radius:50%"></div><svg style="left:2410px;top:20px" width="50" height="45" viewBox="0 0 50 45"><g fill="none" stroke="#5c5c5c" stroke-width="2.2" stroke-linecap="round"><circle cx="21.4" cy="19.1" r="12.3"/><path d="M30.6 28.3 L40.1 37.8"/></g></svg><svg style="left:2485px;top:20px" width="46" height="46" viewBox="0 0 46 46"><g fill="none" stroke="#5c5c5c" stroke-width="2.2" stroke-linecap="round" stroke-linejoin="round"><circle cx="23" cy="24.5" r="13.2"/><path d="M19 7 H27 M23 7 V11 M9.5 11.5 L12.5 9.5 M10.8 10.5 L13 13 M36.5 11.5 L33.5 9.5 M35.2 10.5 L33 13 M13 34.5 L10.5 38.5 M33 34.5 L35.5 38.5"/><path d="M23 15.5 V24.5 L29.5 27"/></g><circle cx="23" cy="24.5" r="2.4" fill="{NG}" style="position:absolute"/></svg><svg style="left:2485px;top:20px" width="46" height="46" viewBox="0 0 46 46"><circle cx="23" cy="24.5" r="2.4" fill="#5c5c5c"/></svg><svg style="left:2560px;top:20px" width="46" height="46" viewBox="0 0 46 46"><g fill="none" stroke="#5c5c5c" stroke-width="2.2" stroke-linecap="round" stroke-linejoin="round"><path d="M8.8 29.6 V21.5 Q8.8 9.6 21 9.6 Q33.2 9.6 33.2 21.5 V29.6 L37.3 33.4 H4.7 Z"/><path d="M17 33.8 Q17 38.3 21 38.3 Q25 38.3 25 33.8"/></g></svg><div class="r" style="left:2579.2px;top:14.6px;width:28px;height:28px;border-radius:50%;background:#e54d42"></div><div class="t" style="left:2579.2px;top:19.37px;width:28px;text-align:center;font-size:20px;color:#fff">2</div><svg style="left:2620px;top:10px" width="60" height="60" viewBox="0 0 60 60"><g fill="none" stroke-linecap="round" stroke-linejoin="round"><path d="M21.7 45.3 L32 35" stroke="#5c5c5c" stroke-width="6.2"/><path d="M21.7 45.3 L32 35" stroke="#f2f2f4" stroke-width="2.4"/><path d="M32 35 L45 22" stroke="#5c5c5c" stroke-width="2"/><path d="M44.2 22.8 L49.6 17.4" stroke="#5c5c5c" stroke-width="5.6" stroke-linecap="butt"/><path d="M45.4 21.6 L48.4 18.6" stroke="#f2f2f4" stroke-width="1.8" stroke-linecap="butt"/><path d="M22.14 16.56 A8.2 8.2 0 0 1 32.95 27.93 L48.56 43.54 A2.2 2.2 0 0 1 45.44 46.66 L29.83 31.05 A8.2 8.2 0 0 1 18.46 20.24 L22.55 24.33 L26.23 20.65 Z" fill="#f2f2f4" stroke="#5c5c5c" stroke-width="2"/></g></svg><div class="r" style="left:2706.2px;top:20.7px;width:44px;height:44px;background:#1fa9f3;border-radius:50%"></div><div class="r" style="left:2719.6px;top:41.6px;width:17px;height:2.2px;background:#fff;border-radius:1.1px"></div><div class="r" style="left:2727px;top:34.4px;width:2.2px;height:17px;background:#fff;border-radius:1.1px"></div><svg style="left:664px;top:149px" width="18" height="11" viewBox="0 0 18 11"><path d="M0.5 0.8 H16.9 L8.7 9.8 Z" fill="#1ca4ec"/></svg><svg style="left:880px;top:149px" width="18" height="11" viewBox="0 0 18 11"><path d="M0.6 0.8 H17 L8.8 9.8 Z" fill="#1ca4ec"/></svg><svg style="left:2697px;top:149px" width="18" height="11" viewBox="0 0 18 11"><path d="M0.8 1 H16.1 L8.45 9 Z" fill="#1ca4ec"/></svg><svg style="left:714px;top:138px" width="20" height="30" viewBox="0 0 20 30"><path d="M5 4 L15.5 14.5 L5 25" fill="none" stroke="#8a8a8a" stroke-width="2.6" stroke-linecap="round" stroke-linejoin="round"/></svg><svg style="left:2478px;top:134px" width="36" height="36" viewBox="0 0 36 36"><g fill="none" stroke="#1ca4ec" stroke-width="2"><rect x="3.4" y="3.1" width="29.4" height="6.5" rx="3.25"/><rect x="8.9" y="14.8" width="23.9" height="6.5" rx="3.25"/><rect x="3.4" y="26.4" width="29.4" height="6.5" rx="3.25"/><path d="M22 14.8 V21.3 M19.8 26.4 V32.9"/></g><path d="M5.5 2.1 H19.8 V10.6 H5.5 A4.25 4.25 0 0 1 5.5 2.1 Z" fill="#1ca4ec"/></svg><div class="r" style="left:2751px;top:129px;width:2px;height:46px;background:#e8e8e8"></div><svg style="left:608px;top:250px" width="26" height="16" viewBox="0 0 26 16"><path d="M4.3 3.9 L13.4 12.5 L22.5 3.9" fill="none" stroke="#1ca4ec" stroke-width="2.2" stroke-linecap="round"/></svg><svg style="left:848px;top:250px" width="26" height="16" viewBox="0 0 26 16"><path d="M4.2 3.9 L13.3 12.5 L22.4 3.9" fill="none" stroke="#1ca4ec" stroke-width="2.2" stroke-linecap="round"/></svg><svg style="left:918px;top:243px" width="36" height="30" viewBox="0 0 36 30"><g fill="none" stroke="#5a5a5a" stroke-width="1.9" stroke-linecap="round" stroke-linejoin="round"><path d="M9.7 5.3 L5.5 10.2 L9.7 14.4"/><path d="M5.5 10.2 H23 Q30 10.2 30 17 Q30 23.9 23 23.9 H14.6"/></g></svg><svg style="left:2592px;top:238px" width="40" height="40" viewBox="0 0 40 40"><g fill="none" stroke="#f50a14" stroke-linecap="round" stroke-linejoin="round"><path d="M7.7 6.7 H22.8" stroke-width="5.3"/><path d="M12.9 30 H31.2" stroke-width="5.3"/><rect x="5.9" y="15.9" width="16.6" height="5.7" rx="2.85" stroke-width="1.9"/><path d="M17.7 16 V21.5" stroke-width="1.6"/><path d="M23.5 6.6 Q29 6.6 29 12 V24.5" stroke-width="1.9"/><path d="M25.5 21.5 L29 25 L32.5 21.5" stroke-width="1.9"/></g></svg><div class="r" style="left:2653px;top:243px;width:2px;height:28px;background:#e0e0e0"></div><svg style="left:2676px;top:236px" width="40" height="40" viewBox="0 0 40 40"><g fill="none" stroke="#333" stroke-width="2.1" stroke-linecap="round" stroke-linejoin="round"><path d="M6.7 18 V11.5 Q6.7 7.3 11 7.3 H29.5 Q34 7.3 34 11.5 V29.5 Q34 33.3 29.5 33.3 H22"/><rect x="6.7" y="24.5" width="9.5" height="9" rx="2"/><path d="M18.1 22.2 L27.6 12.7 M21 12.7 H27.6 V19.4"/></g></svg><div class="r" style="left:2739px;top:243px;width:2px;height:28px;background:#e0e0e0"></div><svg style="left:446px;top:339px" width="34" height="34" viewBox="0 0 34 34"><g fill="none" stroke="#555" stroke-width="1.6" stroke-linecap="round"><path d="M14.9 26.1 H7.2 Q3.2 26.1 3.2 22.1 V7.1 Q3.2 3.1 7.2 3.1 H22.4 Q26.4 3.1 26.4 7.1 V14.8"/><path d="M3.2 9.2 H26.4 M9.2 3.1 V26.1"/></g><g transform="translate(25.5,25.5)" fill="#555"><circle r="3.4" fill="none" stroke="#555" stroke-width="1.6"/><circle r="1.1"/><path d="M-0.9 -3.6 L0 -6 L0.9 -3.6 Z" transform="rotate(0)"/><path d="M-0.9 -3.6 L0 -6 L0.9 -3.6 Z" transform="rotate(45)"/><path d="M-0.9 -3.6 L0 -6 L0.9 -3.6 Z" transform="rotate(90)"/><path d="M-0.9 -3.6 L0 -6 L0.9 -3.6 Z" transform="rotate(135)"/><path d="M-0.9 -3.6 L0 -6 L0.9 -3.6 Z" transform="rotate(180)"/><path d="M-0.9 -3.6 L0 -6 L0.9 -3.6 Z" transform="rotate(225)"/><path d="M-0.9 -3.6 L0 -6 L0.9 -3.6 Z" transform="rotate(270)"/><path d="M-0.9 -3.6 L0 -6 L0.9 -3.6 Z" transform="rotate(315)"/></g></svg><div class="r" style="left:2615px;top:415px;width:160px;height:56px;background:#fff;box-shadow:-6px 8px 22px rgba(0,0,0,.12)"></div><div class="r" style="left:2639px;top:440.5px;width:16px;height:2.2px;background:#1ca4ec"></div><div class="r" style="left:2679.5px;top:432px;width:1.6px;height:22px;background:#9a9a9a"></div><div class="r" style="left:2704.5px;top:441px;width:17px;height:2px;background:#555"></div><div class="r" style="left:2712px;top:433px;width:2px;height:17px;background:#555"></div><div class="r" style="left:2745.5px;top:432px;width:1.6px;height:22px;background:#9a9a9a"></div><div class="r" style="left:1334.5px;top:855px;width:2.2px;height:41px;background:#3a3a3a"></div><div class="r" style="left:1340.3px;top:855px;width:2.2px;height:41px;background:#3a3a3a"></div><div class="r" style="left:1331px;top:870.5px;width:14px;height:10px;border-radius:50%;background:#3a3a3a"></div><div class="r" style="left:659px;top:303px;width:360px;height:329px;background:#fff;border-radius:7px;box-shadow:0 8px 40px rgba(0,0,0,.16)"></div><div class="r" style="left:689.5px;top:290.5px;width:27px;height:27px;background:#fff;transform:rotate(45deg);box-shadow:-3px -3px 6px rgba(0,0,0,.04)"></div><div class="r" style="left:675px;top:303px;width:55px;height:20px;background:#fff"></div><svg style="left:689px;top:345px" width="30" height="30" viewBox="0 0 30 30"><rect width="30" height="30" rx="4" fill="#1ea7f0"/><path d="M7.3 15.5 L12.5 20.6 L22 10.9" fill="none" stroke="#fff" stroke-width="3.5"/></svg><div class="r" style="left:689px;top:417px;width:30px;height:30px;border:2px solid #9fd8f8;border-radius:4px;box-sizing:border-box"></div><svg style="left:689px;top:491px" width="30" height="30" viewBox="0 0 30 30"><rect width="30" height="30" rx="4" fill="#1ea7f0"/><path d="M7.3 15.5 L12.5 20.6 L22 10.9" fill="none" stroke="#fff" stroke-width="3.5"/></svg><svg style="left:689px;top:563px" width="30" height="30" viewBox="0 0 30 30"><rect width="30" height="30" rx="4" fill="#1ea7f0"/><path d="M7.3 15.5 L12.5 20.6 L22 10.9" fill="none" stroke="#fff" stroke-width="3.5"/></svg><div class="t" style="left:738px;top:345.13px;font-size:28.2px;color:#111;font-weight:400;transform:scale(1.0,1.06);transform-origin:0 23.87px;">Date</div><div class="t" style="left:738px;top:416.63px;font-size:28.2px;color:#111;font-weight:400;transform:scale(1.0,1.06);transform-origin:0 23.87px;">Assignee</div><div class="t" style="left:738px;top:491.13px;font-size:28.2px;color:#111;font-weight:400;transform:scale(1.0,1.06);transform-origin:0 23.87px;">Title</div><div class="t" style="left:738px;top:562.62px;font-size:28.21px;color:#111;font-weight:400;transform:scale(1.0,1.06);transform-origin:0 23.88px;">Overdue Items</div>
</body></html>
